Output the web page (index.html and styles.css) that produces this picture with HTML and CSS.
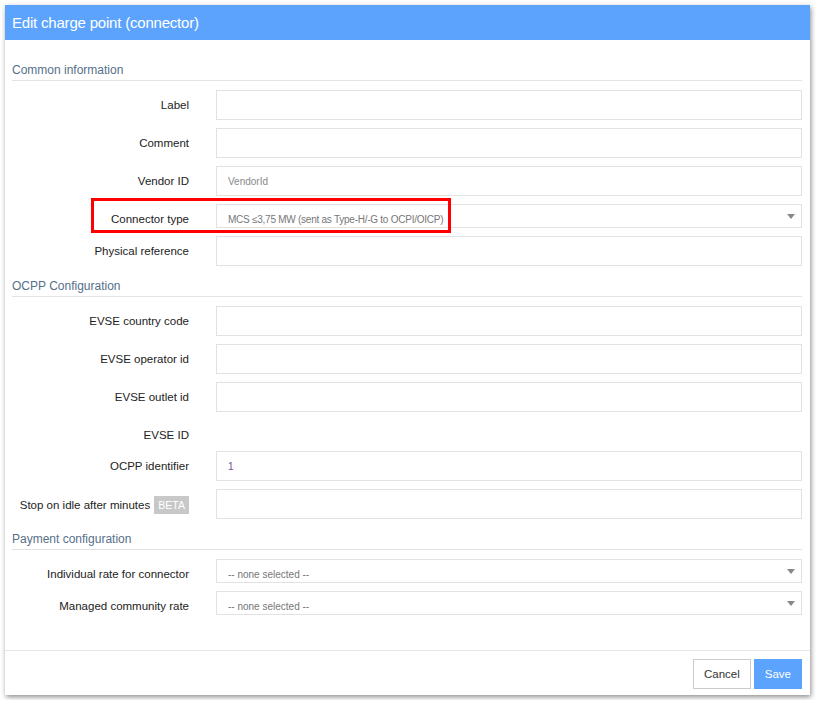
FILE: index.html
```html
<!DOCTYPE html>
<html lang="en">
<head>
    <meta charset="UTF-8">
    <title>Edit charge point (connector)</title>
    <link rel="stylesheet" href="styles.css">
</head>
<body>
    <div class="dialog">
        <div class="dialog-header">Edit charge point (connector)</div>

        <div class="dialog-body">
            <div class="section">Common information</div>
            <div class="row">
                <label>Label</label>
                <div class="field"></div>
            </div>
            <div class="row">
                <label>Comment</label>
                <div class="field"></div>
            </div>
            <div class="row">
                <label>Vendor ID</label>
                <div class="field placeholder">VendorId</div>
            </div>
            <div class="row">
                <label>Connector type</label>
                <div class="select tight">MCS ≤3,75 MW (sent as Type-H/-G to OCPI/OICP)<span class="caret"></span></div>
            </div>
            <div class="row">
                <label>Physical reference</label>
                <div class="field"></div>
            </div>

            <div class="section">OCPP Configuration</div>
            <div class="row">
                <label>EVSE country code</label>
                <div class="field"></div>
            </div>
            <div class="row">
                <label>EVSE operator id</label>
                <div class="field"></div>
            </div>
            <div class="row">
                <label>EVSE outlet id</label>
                <div class="field"></div>
            </div>
            <div class="row">
                <label>EVSE ID</label>
                <div></div>
            </div>
            <div class="row">
                <label>OCPP identifier</label>
                <div class="field value">1</div>
            </div>
            <div class="row">
                <label>Stop on idle after minutes <span class="badge">BETA</span></label>
                <div class="field"></div>
            </div>

            <div class="section">Payment configuration</div>
            <div class="row">
                <label>Individual rate for connector</label>
                <div class="select">-- none selected --<span class="caret"></span></div>
            </div>
            <div class="row">
                <label>Managed community rate</label>
                <div class="select">-- none selected --<span class="caret"></span></div>
            </div>
        </div>

        <div class="dialog-footer">
            <button class="btn">Cancel</button>
            <button class="btn btn-primary">Save</button>
        </div>

        <!-- markierung -->
        <div class="highlight"></div>
    </div>
</body>
</html>
```

FILE: styles.css
```css
body {
    margin: 0;
    background: #ffffff;
    font-family: 'Liberation Sans', Arial, sans-serif;
    font-size: 11.5px;
    color: #222;
}
.dialog {
    position: relative;
    width: 805px;
    margin: 5px;
    background: #fff;
    box-shadow: 1px 2px 5px rgba(0, 0, 0, 0.45);
}
.dialog-header {
    height: 35px;
    line-height: 35px;
    padding-left: 7px;
    background: #5ca3fe;
    color: #fff;
    font-size: 15px;
    letter-spacing: -0.2px;
}
.dialog-body {
    padding: 10px 8px 27px 7px;
    border-bottom: 1px solid #e5e5e5;
}
.section {
    margin: 12px 0 9px;
    padding-bottom: 2px;
    line-height: 16px;
    font-size: 12px;
    color: #56708a;
    border-bottom: 1px solid #e3e3e3;
}
.row {
    display: grid;
    grid-template-columns: 177px 1fr;
    column-gap: 27px;
    margin-bottom: 8px;
}
.row label {
    padding-top: 7px;
    line-height: 16px;
    text-align: right;
}
.field {
    height: 30px;
    box-sizing: border-box;
    border: 1px solid #e2e2e2;
    padding: 7px 11px;
    line-height: 16px;
    font-size: 10px;
}
.placeholder {
    color: #888;
}
.value {
    color: #7a4ca6;
}
.select {
    position: relative;
    height: 24px;
    box-sizing: border-box;
    border: 1px solid #e2e2e2;
    padding: 7px 11px 0;
    line-height: 16px;
    font-size: 10px;
    color: #777;
}
.tight {
    letter-spacing: -0.25px;
}
.caret {
    position: absolute;
    right: 6px;
    top: 9px;
    border-left: 4px solid transparent;
    border-right: 4px solid transparent;
    border-top: 5px solid #888;
}
.badge {
    display: inline-block;
    padding: 0 4px;
    margin-left: 1px;
    background: #c8c8c8;
    color: #fff;
    font-size: 10.5px;
    line-height: 18px;
}
.dialog-footer {
    display: flex;
    justify-content: flex-end;
    gap: 3px;
    padding: 8px 8px 6px;
}
.btn {
    height: 30px;
    padding: 0 10px;
    border: 1px solid #ccc;
    background: #fff;
    color: #333;
    font-family: inherit;
    font-size: 11.5px;
}
.btn-primary {
    border-color: #5ca3fe;
    background: #5ca3fe;
    color: #fff;
}
.highlight {
    position: absolute;
    left: 86px;
    top: 193px;
    width: 360px;
    height: 35px;
    box-sizing: border-box;
    border: 3px solid #ff0000;
}
```
